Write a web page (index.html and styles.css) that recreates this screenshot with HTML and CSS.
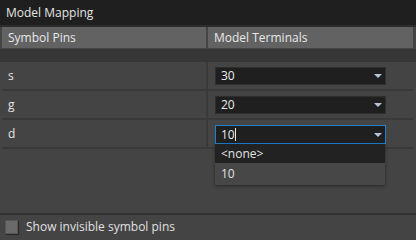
FILE: index.html
```html
<!DOCTYPE html>
<html>
<head>
<meta charset="utf-8">
<link rel="stylesheet" href="styles.css">
</head>
<body>
<div class="title">Model Mapping</div>
<div class="grid">
  <div class="head">
    <div class="hcell">Symbol Pins</div>
    <div class="hcell">Model Terminals</div>
  </div>
  <div class="band"></div>
  <div class="row">
    <div class="cell">s</div>
    <div class="cell vcell"><div class="combo"><span>30</span><span class="arrow"></span></div></div>
  </div>
  <div class="row">
    <div class="cell">g</div>
    <div class="cell vcell"><div class="combo"><span>20</span><span class="arrow"></span></div></div>
  </div>
  <div class="row">
    <div class="cell">d</div>
    <div class="cell vcell">
      <div class="combo focus"><span>10<span class="caret"></span></span><span class="arrow"></span></div>
      <div class="popup">
        <div class="item sel">&lt;none&gt;</div>
        <div class="item">10</div>
      </div>
    </div>
  </div>
</div>
<div class="footer">
  <span class="check"></span>
  <span class="label">Show invisible symbol pins</span>
</div>
</body>
</html>
```
FILE: styles.css
```css
html, body {
  margin: 0;
  padding: 0;
}
body {
  width: 416px;
  height: 240px;
  background: #444444;
  font-family: "Open Sans", "Noto Sans", sans-serif;
  font-size: 12px;
  color: #e4e4e4;
  overflow: hidden;
}
.title {
  height: 25px;
  line-height: 25px;
  padding: 0 6px;
  background: #1f1f1f;
  border-bottom: 2px solid #2c2c2c;
}
.grid {
  height: 186px;
  padding: 0 3px 0 2px;
  border-bottom: 2px solid #333333;
  display: flex;
  flex-direction: column;
}
.head {
  display: grid;
  grid-template-columns: 204px 205px;
  column-gap: 2px;
  height: 21px;
}
.hcell {
  background: #626262;
  line-height: 21px;
  padding: 0 6px;
  color: #e8e8e8;
}
.band {
  height: 13px;
  background: #363636;
  margin: 1px -3px 0 -2px;
}
.row {
  display: grid;
  grid-template-columns: 204px 205px;
  column-gap: 2px;
  height: 27px;
  border-bottom: 2px solid #393939;
  background: #393939;
}
.cell {
  background: #444444;
  line-height: 27px;
  padding: 0 6px;
}
.vcell {
  padding: 5px 0 0 7px;
  position: relative;
}
.combo {
  width: 169px;
  height: 16px;
  background: #1f1f1f;
  border: 1px solid #2e2e2e;
  display: flex;
  align-items: center;
  justify-content: space-between;
  padding: 0 0 0 5px;
  box-sizing: content-box;
  line-height: 16px;
  width: 164px;
  color: #ececec;
}
.combo.focus {
  border-color: #1d80d0;
  height: 17px;
}
.arrow {
  width: 0;
  height: 0;
  border-left: 4px solid transparent;
  border-right: 4px solid transparent;
  border-top: 4px solid #b4c4dc;
  margin-right: 3px;
}
.caret {
  display: inline-block;
  width: 1px;
  height: 13px;
  background: #e8e8e8;
  vertical-align: -2px;
  margin-left: 0;
}
.popup {
  position: absolute;
  left: 7px;
  top: 24px;
  width: 170px;
  background: #474747;
  box-shadow: 0 1px 3px rgba(0, 0, 0, 0.45);
  z-index: 2;
}
.item {
  height: 20px;
  line-height: 20px;
  padding: 0 6px;
  color: #e4e4e4;
}
.item.sel {
  background: #222222;
  height: 19px;
  line-height: 19px;
}
.item + .item {
  height: 22px;
  line-height: 22px;
}
.footer {
  display: flex;
  align-items: center;
  height: 25px;
  padding: 0 5px;
  gap: 8px;
  margin-top: -1px;
}
.check {
  width: 11px;
  height: 12px;
  background: #6a6a6a;
  border: 1px solid #555555;
  box-shadow: 1px 1px 1px #2a2a2a;
}
.label {
  color: #e0e0e0;
}
```
